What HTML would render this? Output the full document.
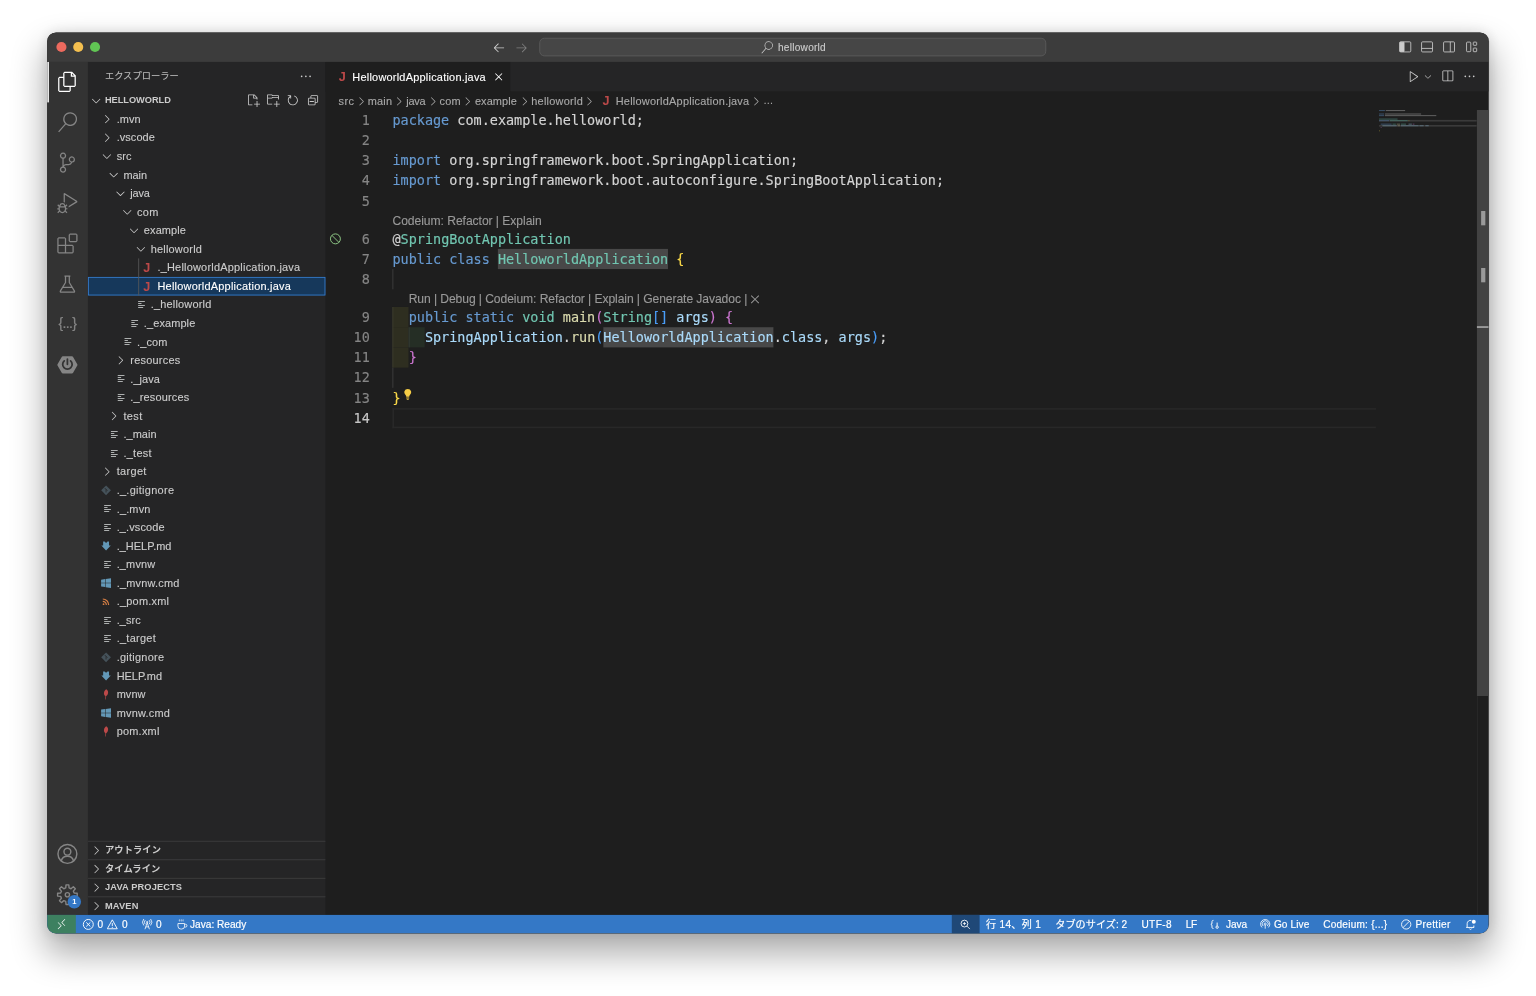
<!DOCTYPE html>
<html lang="ja"><head><meta charset="utf-8"><title>helloworld</title>
<style>
*{box-sizing:border-box;margin:0;padding:0}
html,body{width:1536px;height:996px;overflow:hidden;background:#fff}
body{position:relative;font-family:"Liberation Sans","Noto Sans CJK JP",sans-serif;-webkit-font-smoothing:antialiased}
#layer{position:absolute;left:0;top:0;width:1536px;height:996px;will-change:transform}
#shadow{position:absolute;left:0;top:0;transform:translate(47.2px,32.5px);background:#a8a8a8;width:1441.50px;height:900.94px;border-radius:8.9px;
 box-shadow:0 18px 34px 2px rgba(0,0,0,.33),0 0 14px rgba(0,0,0,.11)}
#win{position:absolute;left:0;top:0;width:1712px;height:1070px;transform:translate(47.2px,32.5px) scale(0.842);transform-origin:0 0;
 border-radius:10.6px;overflow:hidden;background:#1e1e1e;color:#ccc;font-size:13px;line-height:1}
#win div,#win span,#win svg{position:absolute}
#win span.t{white-space:pre;line-height:1}
#win div,#win span,#win svg{left:0;top:0}
svg{overflow:visible;fill:none;stroke:currentColor;stroke-width:1}
svg.f{fill:currentColor;stroke:none}
#win .title{left:0;top:0;width:1712px;height:35px;background:#3c3c3c}
#win .act{left:0;top:35px;width:49px;height:1013px;background:#333333;color:#858585}
#win .side{left:0;top:0;transform:translate(48.4px,35px);width:282px;height:1013px;background:#252526}
#win .tabs{left:331px;top:35px;width:1381px;height:35px;background:#252526}
#win .tab{left:0;top:0;width:219px;height:35px;background:#1e1e1e}
#win .status{left:0;top:1048px;width:1712px;height:22px;background:#3478c6;color:#fff;font-size:12px}
#win .remote{left:0;top:0;width:34px;height:22px;background:#3d8060}
.code span.t{font-family:"DejaVu Sans Mono","Liberation Mono",monospace;font-size:16px}
.ln{font-family:"DejaVu Sans Mono","Liberation Mono",monospace;font-size:16px;color:#858585;text-align:right;width:60px;line-height:24px;height:24px}
.code span.lens{font-family:"Liberation Sans","Noto Sans CJK JP",sans-serif;font-size:14.4px;color:#999}
.row span.t{font-size:13px;color:#cccccc}
.hdr{font-size:11px;font-weight:bold;color:#cccccc}
.bc span.t{color:#a9a9a9;font-size:13px}
#win span.sb{-webkit-text-stroke:.2px #fff}
#win span.lbl,#win span.bcx,#win span.lens,#win span.cc,#win span.sbtitle{-webkit-text-stroke-width:.14px}
#win span.cl,#win .ln{-webkit-text-stroke-width:.18px}

i{font-style:normal}
</style></head><body>
<div id="layer"><div id="shadow"></div>
<div id="win">
<div class="title"><div style="transform:translate(10.90px,11.20px);width:12.20px;height:12.20px;border-radius:50%;background:#ed6a5e"></div><div style="transform:translate(30.85px,11.20px);width:12.20px;height:12.20px;border-radius:50%;background:#f4bf4f"></div><div style="transform:translate(50.80px,11.20px);width:12.20px;height:12.20px;border-radius:50%;background:#61c554"></div><svg class="f" width="16" height="16" viewBox="0 0 16 16" style="transform:translate(528.62px,9.80px);color:#cccccc;"><path d="M7 3.093l-5 5V8.8l5 5 .707-.707-4.146-4.147H14v-1H3.56L7.707 3.8 7 3.093z"/></svg><svg class="f" width="16" height="16" viewBox="0 0 16 16" style="transform:translate(555.33px,9.80px);color:#7f7f7f;"><path d="M9 13.887l5-5V8.18l-5-5-.707.707 4.146 4.147H2v1h10.44L8.293 13.18l.707.707z"/></svg><div style="transform:translate(584.45px,6.30px);width:601.86px;height:22.00px;background:#464646;border:1px solid #5d5d5d;border-radius:6px"></div><svg class="f" width="14.5" height="14.5" viewBox="0 0 16 16" style="transform:translate(847.66px,10.45px);color:#cccccc;"><path transform="scale(.6667)" d="M15.25 0a8.25 8.25 0 0 0-6.18 13.72L1 22.88l1.12 1 8.05-9.12A8.251 8.251 0 1 0 15.25.01V0zm0 15a6.75 6.75 0 1 1 0-13.5 6.75 6.75 0 0 1 0 13.5z"/></svg><span class="t cc" style="transform:translate(867.92px,calc(18.10px - 50%));font-size:12px;color:#cccccc;letter-spacing:0.298px;">helloworld</span><svg width="16" height="16" viewBox="0 0 16 16" style="transform:translate(1604.96px,9.10px);color:#cccccc;"><rect x="1.500" y="2" width="13" height="12" rx="1.200"/><path fill="currentColor" d="M1.500 2.500h5v11h-5z"/></svg><svg width="16" height="16" viewBox="0 0 16 16" style="transform:translate(1630.77px,9.10px);color:#cccccc;"><rect x="1.500" y="2" width="13" height="12" rx="1.200"/><path d="M1.500 9.800h13"/></svg><svg width="16" height="16" viewBox="0 0 16 16" style="transform:translate(1656.89px,9.10px);color:#cccccc;"><rect x="1.500" y="2" width="13" height="12" rx="1.200"/><path d="M9.500 2v12"/></svg><svg width="16" height="16" viewBox="0 0 16 16" style="transform:translate(1683.70px,9.10px);color:#cccccc;"><rect x="2" y="2.300" width="5" height="11.400" rx="1"/><rect x="10" y="2.300" width="4" height="3.800" rx=".6"/><rect x="10" y="9.400" width="4" height="4.300" rx=".6"/></svg></div>
<div class="act"><div style="transform:translate(0.00px,0.00px);width:2.40px;height:48.00px;background:#ffffff"></div><svg class="f" width="24" height="24" viewBox="0 0 24 24" style="transform:translate(12.00px,11.60px);color:#ffffff;"><path d="M17.5 0h-9L7 1.5V6H2.5L1 7.5v15.07L2.5 24h12.07L16 22.57V18h4.7l1.3-1.43V4.5L17.5 0zm0 2.12l2.38 2.38H17.5V2.12zm-3 20.38h-12v-15H7v9.07L8.5 18h6v4.5zm6-6h-12v-15H16V6h4.5v10.5z"/></svg><svg class="f" width="24" height="24" viewBox="0 0 24 24" style="transform:translate(12.00px,59.60px);"><path d="M15.25 0a8.25 8.25 0 0 0-6.18 13.72L1 22.88l1.12 1 8.05-9.12A8.251 8.251 0 1 0 15.25.01V0zm0 15a6.75 6.75 0 1 1 0-13.5 6.75 6.75 0 0 1 0 13.5z"/></svg><svg class="f" width="24" height="24" viewBox="0 0 24 24" style="transform:translate(12.00px,107.60px);"><path d="M21.007 8.222A3.738 3.738 0 0 0 15.045 5.2a3.737 3.737 0 0 0 1.156 6.583 2.988 2.988 0 0 1-2.668 1.67h-2.99a4.456 4.456 0 0 0-2.989 1.165V7.4a3.737 3.737 0 1 0-1.494 0v9.117a3.776 3.776 0 1 0 1.816.099 2.99 2.99 0 0 1 2.668-1.667h2.99a4.484 4.484 0 0 0 4.223-3.039 3.736 3.736 0 0 0 3.25-3.687zM4.565 3.738a2.242 2.242 0 1 1 4.484 0 2.242 2.242 0 0 1-4.484 0zm4.484 16.441a2.242 2.242 0 1 1-4.484 0 2.242 2.242 0 0 1 4.484 0zm8.221-9.715a2.242 2.242 0 1 1 0-4.485 2.242 2.242 0 0 1 0 4.485z"/></svg><svg class="f" width="24" height="24" viewBox="0 0 24 24" style="transform:translate(12.00px,155.60px);"><path d="M10.94 13.5l-1.32 1.32a3.73 3.73 0 0 0-7.24 0L1.06 13.5 0 14.56l1.72 1.72-.22.22V18H0v1.5h1.5v.08c.077.489.214.966.41 1.42L0 22.94 1.06 24l1.65-1.65A4.308 4.308 0 0 0 6 24a4.31 4.31 0 0 0 3.29-1.65L10.94 24 12 22.94 10.09 21c.198-.464.336-.951.41-1.45v-.1H12V18h-1.5v-1.5l-.22-.22L12 14.56l-1.06-1.06zM6 13.5a2.25 2.25 0 0 1 2.25 2.25h-4.5A2.25 2.25 0 0 1 6 13.5zm3 6a3.33 3.33 0 0 1-3 3 3.33 3.33 0 0 1-3-3v-2.25h6v2.25zm14.76-9.9v1.26L13.5 17.37V15.6l8.5-5.37L9 2v9.46a5.07 5.07 0 0 0-1.5-.72V.63L8.64 0l15.12 9.6z"/></svg><svg class="f" width="24" height="24" viewBox="0 0 24 24" style="transform:translate(12.00px,203.60px);"><path d="M13.5 1.5L15 0h7.5L24 1.5V9l-1.5 1.5H15L13.5 9V1.5zm1.5 0V9h7.5V1.5H15zM0 15V6l1.5-1.5H9L10.5 6v7.5H18l1.5 1.5v7.5L18 24H1.5L0 22.5V15zm9-1.5V6H1.5v7.5H9zM9 15H1.5v7.5H9V15zm1.5 7.5H18V15h-7.5v7.5z"/></svg><svg width="24" height="24" viewBox="0 0 24 24" style="transform:translate(12.00px,251.60px);"><path d="M8.5 2.75h7M9.75 2.75v7.5L3.6 20.6a.8.8 0 0 0 .7 1.15h15.4a.8.8 0 0 0 .7-1.15L14.25 10.25v-7.5M6.2 16.2h11.6" stroke-width="1.5" stroke-linejoin="round"/></svg><span class="t" style="transform:translate(calc(24px - 50%),calc(310.0px - 50%));font-size:16.5px;letter-spacing:-.7px;-webkit-text-stroke:.25px #858585;color:#858585">{...}</span><svg width="26.5" height="26.5" viewBox="0 0 24 24" style="transform:translate(10.75px,345.55px);"><path fill="currentColor" stroke="none" d="M6.6 2.6h10.8a1.6 1.6 0 0 1 1.4.8l5 8.6a1.6 1.6 0 0 1 0 1.6l-5 8.6a1.6 1.6 0 0 1-1.4.8H6.6a1.6 1.6 0 0 1-1.4-.8l-5-8.6a1.6 1.6 0 0 1 0-1.6l5-8.6a1.6 1.6 0 0 1 1.4-.8z" transform="translate(1.2 1.3) scale(.9)"/><path stroke="#333" stroke-width="1.9" stroke-linecap="round" d="M12 6.6v5.6M8.6 8.5a5.1 5.1 0 1 0 6.8 0"/></svg><svg width="26.4" height="26.4" viewBox="0 0 24 24" style="transform:translate(10.80px,927.40px);"><circle cx="12" cy="12" r="10.2" stroke-width="1.55"/><circle cx="12" cy="9.600" r="3.700" stroke-width="1.55"/><path d="M5.300 19.600c.800-3.300 3.500-5.200 6.700-5.200s5.900 1.900 6.700 5.200" stroke-width="1.55"/></svg><svg width="26.4" height="26.4" viewBox="0 0 24 24" style="transform:translate(10.80px,975.80px);"><path d="M19.28 10.19 L22.59 10.49 L22.59 13.51 L19.28 13.81 L18.43 15.87 L20.56 18.42 L18.42 20.56 L15.87 18.43 L13.81 19.28 L13.51 22.59 L10.49 22.59 L10.19 19.28 L8.13 18.43 L5.58 20.56 L3.44 18.42 L5.57 15.87 L4.72 13.81 L1.41 13.51 L1.41 10.49 L4.72 10.19 L5.57 8.13 L3.44 5.58 L5.58 3.44 L8.13 5.57 L10.19 4.72 L10.49 1.41 L13.51 1.41 L13.81 4.72 L15.87 5.57 L18.42 3.44 L20.56 5.58 L18.43 8.13Z" stroke-width="1.5" stroke-linejoin="round"/><circle cx="12" cy="12" r="2.3" stroke-width="1.5"/></svg><div style="transform:translate(24.20px,989.40px);width:16.00px;height:16.00px;border-radius:50%;background:#3478c6"></div><span class="t" style="transform:translate(calc(32.2px - 50%),calc(997.7px - 50%));font-size:9px;font-weight:bold;color:#fff">1</span></div>
<div class="side"><div style="transform:translate(-.4px,0)"><span class="t sbtitle" style="transform:translate(20.50px,calc(17.00px - 50%));font-size:11px;color:#bbbbbb">エクスプローラー</span><svg class="f" width="16" height="16" viewBox="0 0 16 16" style="transform:translate(251.20px,9.00px);color:#cccccc;"><path d="M4 8a1 1 0 1 1-2 0 1 1 0 0 1 2 0zm5 0a1 1 0 1 1-2 0 1 1 0 0 1 2 0zm5 0a1 1 0 1 1-2 0 1 1 0 0 1 2 0z"/></svg><svg class="f" width="16" height="16" viewBox="0 0 16 16" style="transform:translate(2.20px,38.00px);color:#cccccc;"><path d="M7.976 10.072l4.357-4.357.62.618L8.284 11h-.618L3 6.333l.619-.618 4.357 4.357z"/></svg><span class="t hdr" style="transform:translate(20.50px,calc(45.80px - 50%));;letter-spacing:-0.045px;">HELLOWORLD</span><svg class="f" width="16" height="16" viewBox="0 0 16 16" style="transform:translate(188.70px,37.50px);color:#cccccc;"><path d="M9.5 1.1l3.4 3.5.1.4v2h-1V6H8V2H3v11h4v1H2.5l-.5-.5v-12l.5-.5h6.7l.3.1zM9 2v3h2.9L9 2zm4 14h-1v-3H9v-1h3V9h1v3h3v1h-3v3z"/></svg><svg class="f" width="16" height="16" viewBox="0 0 16 16" style="transform:translate(212.20px,37.50px);color:#cccccc;"><path d="M14.5 2H7.71l-.85-.85L6.51 1h-5l-.5.5v11l.5.5H7v-1H1.99V6h4.49l.35-.15.86-.86H14v1.5l-.001.51h1.011V2.5L14.5 2zm-.51 2h-6.5l-.35.15-.86.86H2v-3h4.29l.85.85.36.15H14l-.01.99zM13 16h-1v-3H9v-1h3V9h1v3h3v1h-3v3z"/></svg><svg class="f" width="16" height="16" viewBox="0 0 16 16" style="transform:translate(235.70px,37.50px);color:#cccccc;"><path fill-rule="evenodd" d="M4.681 3H2V2h3.5l.5.5V6H5V4a5 5 0 1 0 4.530-.761l.302-.954A6 6 0 1 1 4.681 3z"/></svg><svg class="f" width="16" height="16" viewBox="0 0 16 16" style="transform:translate(259.70px,37.50px);color:#cccccc;"><path d="M9 9H4v1h5V9z"/><path fill-rule="evenodd" d="M5 3l1-1h7l1 1v7l-1 1h-2v2l-1 1H3l-1-1V6l1-1h2V3zm1 2h4l1 1v4h2V3H6v2zm4 1H3v7h7V6z"/></svg><div class="row" style="left:0;top:0"><svg class="f" width="16" height="16" viewBox="0 0 16 16" style="transform:translate(14.90px,59.90px);color:#cccccc;"><path d="M10.072 8.024L5.715 3.667l.618-.62L11 7.716v.618L6.333 13l-.618-.619 4.357-4.357z"/></svg><span class="t lbl" style="transform:translate(34.50px,calc(67.90px - 50%));color:#cccccc;letter-spacing:0.110px;">.mvn</span></div><div class="row" style="left:0;top:0"><svg class="f" width="16" height="16" viewBox="0 0 16 16" style="transform:translate(14.90px,81.94px);color:#cccccc;"><path d="M10.072 8.024L5.715 3.667l.618-.62L11 7.716v.618L6.333 13l-.618-.619 4.357-4.357z"/></svg><span class="t lbl" style="transform:translate(34.50px,calc(89.94px - 50%));color:#cccccc;letter-spacing:0.079px;">.vscode</span></div><div class="row" style="left:0;top:0"><svg class="f" width="16" height="16" viewBox="0 0 16 16" style="transform:translate(14.90px,103.97px);color:#cccccc;"><path d="M7.976 10.072l4.357-4.357.62.618L8.284 11h-.618L3 6.333l.619-.618 4.357 4.357z"/></svg><span class="t lbl" style="transform:translate(34.50px,calc(111.97px - 50%));color:#cccccc;letter-spacing:0.198px;">src</span></div><div class="row" style="left:0;top:0"><svg class="f" width="16" height="16" viewBox="0 0 16 16" style="transform:translate(22.97px,126.00px);color:#cccccc;"><path d="M7.976 10.072l4.357-4.357.62.618L8.284 11h-.618L3 6.333l.619-.618 4.357 4.357z"/></svg><span class="t lbl" style="transform:translate(42.57px,calc(134.00px - 50%));color:#cccccc;letter-spacing:-0.038px;">main</span></div><div class="row" style="left:0;top:0"><svg class="f" width="16" height="16" viewBox="0 0 16 16" style="transform:translate(31.04px,148.04px);color:#cccccc;"><path d="M7.976 10.072l4.357-4.357.62.618L8.284 11h-.618L3 6.333l.619-.618 4.357 4.357z"/></svg><span class="t lbl" style="transform:translate(50.64px,calc(156.04px - 50%));color:#cccccc;letter-spacing:-0.204px;">java</span></div><div class="row" style="left:0;top:0"><svg class="f" width="16" height="16" viewBox="0 0 16 16" style="transform:translate(39.11px,170.08px);color:#cccccc;"><path d="M7.976 10.072l4.357-4.357.62.618L8.284 11h-.618L3 6.333l.619-.618 4.357 4.357z"/></svg><span class="t lbl" style="transform:translate(58.71px,calc(178.08px - 50%));color:#cccccc;letter-spacing:0.401px;">com</span></div><div class="row" style="left:0;top:0"><svg class="f" width="16" height="16" viewBox="0 0 16 16" style="transform:translate(47.18px,192.11px);color:#cccccc;"><path d="M7.976 10.072l4.357-4.357.62.618L8.284 11h-.618L3 6.333l.619-.618 4.357 4.357z"/></svg><span class="t lbl" style="transform:translate(66.78px,calc(200.11px - 50%));color:#cccccc;letter-spacing:0.139px;">example</span></div><div class="row" style="left:0;top:0"><svg class="f" width="16" height="16" viewBox="0 0 16 16" style="transform:translate(55.25px,214.15px);color:#cccccc;"><path d="M7.976 10.072l4.357-4.357.62.618L8.284 11h-.618L3 6.333l.619-.618 4.357 4.357z"/></svg><span class="t lbl" style="transform:translate(74.85px,calc(222.15px - 50%));color:#cccccc;letter-spacing:0.263px;">helloworld</span></div><div class="row" style="left:0;top:0"><span class="t jj" style="transform:translate(66.12px,calc(243.98px - 50%));font-size:15px;font-weight:bold;color:#bc4949">J</span><span class="t lbl" style="transform:translate(82.92px,calc(244.18px - 50%));color:#cccccc;letter-spacing:0.254px;">._HelloworldApplication.java</span></div><div style="transform:translate(0.40px,255.31px);width:282.00px;height:22.00px;background:#16385b;border:1px solid #377dce"></div><div class="row" style="left:0;top:0"><span class="t jj" style="transform:translate(66.12px,calc(266.01px - 50%));font-size:15px;font-weight:bold;color:#bc4949">J</span><span class="t lbl" style="transform:translate(82.92px,calc(266.21px - 50%));color:#ffffff;letter-spacing:0.266px;">HelloworldApplication.java</span></div><div class="row" style="left:0;top:0"><div style="transform:translate(59.98px,283.88px);width:8.31px;height:1.19px;background:#c8cbca"></div><div style="transform:translate(59.98px,286.26px);width:4.28px;height:1.19px;background:#c8cbca"></div><div style="transform:translate(59.98px,288.63px);width:8.31px;height:1.19px;background:#c8cbca"></div><div style="transform:translate(59.98px,291.01px);width:6.06px;height:1.19px;background:#c8cbca"></div><span class="t lbl" style="transform:translate(74.85px,calc(288.25px - 50%));color:#cccccc;letter-spacing:0.246px;">._helloworld</span></div><div class="row" style="left:0;top:0"><div style="transform:translate(51.91px,306.45px);width:8.31px;height:1.19px;background:#c8cbca"></div><div style="transform:translate(51.91px,308.82px);width:4.28px;height:1.19px;background:#c8cbca"></div><div style="transform:translate(51.91px,311.20px);width:8.31px;height:1.19px;background:#c8cbca"></div><div style="transform:translate(51.91px,313.57px);width:6.06px;height:1.19px;background:#c8cbca"></div><span class="t lbl" style="transform:translate(66.78px,calc(310.28px - 50%));color:#cccccc;letter-spacing:0.130px;">._example</span></div><div class="row" style="left:0;top:0"><div style="transform:translate(43.84px,327.83px);width:8.31px;height:1.19px;background:#c8cbca"></div><div style="transform:translate(43.84px,330.20px);width:4.28px;height:1.19px;background:#c8cbca"></div><div style="transform:translate(43.84px,332.58px);width:8.31px;height:1.19px;background:#c8cbca"></div><div style="transform:translate(43.84px,334.95px);width:6.06px;height:1.19px;background:#c8cbca"></div><span class="t lbl" style="transform:translate(58.71px,calc(332.32px - 50%));color:#cccccc;letter-spacing:0.164px;">._com</span></div><div class="row" style="left:0;top:0"><svg class="f" width="16" height="16" viewBox="0 0 16 16" style="transform:translate(31.04px,346.35px);color:#cccccc;"><path d="M10.072 8.024L5.715 3.667l.618-.62L11 7.716v.618L6.333 13l-.618-.619 4.357-4.357z"/></svg><span class="t lbl" style="transform:translate(50.64px,calc(354.35px - 50%));color:#cccccc;letter-spacing:0.282px;">resources</span></div><div class="row" style="left:0;top:0"><div style="transform:translate(35.77px,371.77px);width:8.31px;height:1.19px;background:#c8cbca"></div><div style="transform:translate(35.77px,374.14px);width:4.28px;height:1.19px;background:#c8cbca"></div><div style="transform:translate(35.77px,376.52px);width:8.31px;height:1.19px;background:#c8cbca"></div><div style="transform:translate(35.77px,378.90px);width:6.06px;height:1.19px;background:#c8cbca"></div><span class="t lbl" style="transform:translate(50.64px,calc(376.39px - 50%));color:#cccccc;letter-spacing:0.115px;">._java</span></div><div class="row" style="left:0;top:0"><div style="transform:translate(35.77px,394.33px);width:8.31px;height:1.19px;background:#c8cbca"></div><div style="transform:translate(35.77px,396.71px);width:4.28px;height:1.19px;background:#c8cbca"></div><div style="transform:translate(35.77px,399.09px);width:8.31px;height:1.19px;background:#c8cbca"></div><div style="transform:translate(35.77px,401.46px);width:6.06px;height:1.19px;background:#c8cbca"></div><span class="t lbl" style="transform:translate(50.64px,calc(398.42px - 50%));color:#cccccc;letter-spacing:0.205px;">._resources</span></div><div class="row" style="left:0;top:0"><svg class="f" width="16" height="16" viewBox="0 0 16 16" style="transform:translate(22.97px,412.46px);color:#cccccc;"><path d="M10.072 8.024L5.715 3.667l.618-.62L11 7.716v.618L6.333 13l-.618-.619 4.357-4.357z"/></svg><span class="t lbl" style="transform:translate(42.57px,calc(420.46px - 50%));color:#cccccc;letter-spacing:0.432px;">test</span></div><div class="row" style="left:0;top:0"><div style="transform:translate(27.70px,438.28px);width:8.31px;height:1.19px;background:#c8cbca"></div><div style="transform:translate(27.70px,440.65px);width:4.28px;height:1.19px;background:#c8cbca"></div><div style="transform:translate(27.70px,443.03px);width:8.31px;height:1.19px;background:#c8cbca"></div><div style="transform:translate(27.70px,445.40px);width:6.06px;height:1.19px;background:#c8cbca"></div><span class="t lbl" style="transform:translate(42.57px,calc(442.50px - 50%));color:#cccccc;letter-spacing:0.048px;">._main</span></div><div class="row" style="left:0;top:0"><div style="transform:translate(27.70px,460.84px);width:8.31px;height:1.19px;background:#c8cbca"></div><div style="transform:translate(27.70px,463.22px);width:4.28px;height:1.19px;background:#c8cbca"></div><div style="transform:translate(27.70px,465.59px);width:8.31px;height:1.19px;background:#c8cbca"></div><div style="transform:translate(27.70px,467.97px);width:6.06px;height:1.19px;background:#c8cbca"></div><span class="t lbl" style="transform:translate(42.57px,calc(464.53px - 50%));color:#cccccc;letter-spacing:0.302px;">._test</span></div><div class="row" style="left:0;top:0"><svg class="f" width="16" height="16" viewBox="0 0 16 16" style="transform:translate(14.90px,478.56px);color:#cccccc;"><path d="M10.072 8.024L5.715 3.667l.618-.62L11 7.716v.618L6.333 13l-.618-.619 4.357-4.357z"/></svg><span class="t lbl" style="transform:translate(34.50px,calc(486.56px - 50%));color:#cccccc;letter-spacing:0.417px;">target</span></div><div class="row" style="left:0;top:0"><svg width="16" height="16" viewBox="0 0 16 16" style="transform:translate(13.90px,500.70px);color:#45525a;"><path fill="currentColor" stroke="none" d="M8 2.200L13.800 8 8 13.800 2.200 8z"/><path stroke="#252526" stroke-width=".9" d="M6.400 5.300l3.300 3.300M8 6.900v3.700"/></svg><span class="t lbl" style="transform:translate(34.50px,calc(508.60px - 50%));color:#cccccc;letter-spacing:0.340px;">._.gitignore</span></div><div class="row" style="left:0;top:0"><div style="transform:translate(19.63px,526.16px);width:8.31px;height:1.19px;background:#c8cbca"></div><div style="transform:translate(19.63px,528.54px);width:4.28px;height:1.19px;background:#c8cbca"></div><div style="transform:translate(19.63px,530.91px);width:8.31px;height:1.19px;background:#c8cbca"></div><div style="transform:translate(19.63px,533.29px);width:6.06px;height:1.19px;background:#c8cbca"></div><span class="t lbl" style="transform:translate(34.50px,calc(530.63px - 50%));color:#cccccc;letter-spacing:0.208px;">._.mvn</span></div><div class="row" style="left:0;top:0"><div style="transform:translate(19.63px,548.73px);width:8.31px;height:1.19px;background:#c8cbca"></div><div style="transform:translate(19.63px,551.10px);width:4.28px;height:1.19px;background:#c8cbca"></div><div style="transform:translate(19.63px,553.48px);width:8.31px;height:1.19px;background:#c8cbca"></div><div style="transform:translate(19.63px,555.86px);width:6.06px;height:1.19px;background:#c8cbca"></div><span class="t lbl" style="transform:translate(34.50px,calc(552.67px - 50%));color:#cccccc;letter-spacing:0.150px;">._.vscode</span></div><div class="row" style="left:0;top:0"><svg width="15" height="15" viewBox="0 0 16 16" style="transform:translate(14.40px,567.31px);color:#6398b7;"><path fill="currentColor" stroke="none" d="M4.300 2.500h1.800l1.900 1.600 1.900-1.600h1.800v5h2.300L8 13.800 2 7.500h2.300z"/></svg><span class="t lbl" style="transform:translate(34.50px,calc(574.71px - 50%));color:#cccccc;letter-spacing:0.032px;">._HELP.md</span></div><div class="row" style="left:0;top:0"><div style="transform:translate(19.63px,592.67px);width:8.31px;height:1.19px;background:#c8cbca"></div><div style="transform:translate(19.63px,595.05px);width:4.28px;height:1.19px;background:#c8cbca"></div><div style="transform:translate(19.63px,597.42px);width:8.31px;height:1.19px;background:#c8cbca"></div><div style="transform:translate(19.63px,599.80px);width:6.06px;height:1.19px;background:#c8cbca"></div><span class="t lbl" style="transform:translate(34.50px,calc(596.74px - 50%));color:#cccccc;letter-spacing:0.194px;">._mvnw</span></div><div class="row" style="left:0;top:0"><svg width="14.5" height="14.5" viewBox="0 0 16 16" style="transform:translate(14.65px,611.62px);color:#6398b7;"><path fill="currentColor" stroke="none" d="M1.500 3.600l5.300-.8v4.900H1.500zM7.500 2.700l7-1v6H7.500zM1.500 8.400h5.300v4.900l-5.300-.8zM7.500 8.400h7v6l-7-1z"/></svg><span class="t lbl" style="transform:translate(34.50px,calc(618.77px - 50%));color:#cccccc;letter-spacing:0.256px;">._mvnw.cmd</span></div><div class="row" style="left:0;top:0"><svg width="13" height="13" viewBox="0 0 16 16" style="transform:translate(15.40px,634.41px);color:#d57e44;"><path d="M3.200 4.200a8.600 8.600 0 0 1 8.600 8.600M3.200 7.600a5.200 5.200 0 0 1 5.200 5.200" stroke-width="1.700"/><circle cx="4.300" cy="11.700" r="1.300" fill="currentColor" stroke="none"/></svg><span class="t lbl" style="transform:translate(34.50px,calc(640.81px - 50%));color:#cccccc;letter-spacing:0.278px;">._pom.xml</span></div><div class="row" style="left:0;top:0"><div style="transform:translate(19.63px,659.18px);width:8.31px;height:1.19px;background:#c8cbca"></div><div style="transform:translate(19.63px,661.56px);width:4.28px;height:1.19px;background:#c8cbca"></div><div style="transform:translate(19.63px,663.93px);width:8.31px;height:1.19px;background:#c8cbca"></div><div style="transform:translate(19.63px,666.31px);width:6.06px;height:1.19px;background:#c8cbca"></div><span class="t lbl" style="transform:translate(34.50px,calc(662.85px - 50%));color:#cccccc;letter-spacing:0.137px;">._src</span></div><div class="row" style="left:0;top:0"><div style="transform:translate(19.63px,680.56px);width:8.31px;height:1.19px;background:#c8cbca"></div><div style="transform:translate(19.63px,682.93px);width:4.28px;height:1.19px;background:#c8cbca"></div><div style="transform:translate(19.63px,685.31px);width:8.31px;height:1.19px;background:#c8cbca"></div><div style="transform:translate(19.63px,687.68px);width:6.06px;height:1.19px;background:#c8cbca"></div><span class="t lbl" style="transform:translate(34.50px,calc(684.88px - 50%));color:#cccccc;letter-spacing:0.338px;">._target</span></div><div class="row" style="left:0;top:0"><svg width="16" height="16" viewBox="0 0 16 16" style="transform:translate(13.90px,699.01px);color:#45525a;"><path fill="currentColor" stroke="none" d="M8 2.200L13.800 8 8 13.800 2.200 8z"/><path stroke="#252526" stroke-width=".9" d="M6.400 5.300l3.300 3.300M8 6.900v3.700"/></svg><span class="t lbl" style="transform:translate(34.50px,calc(706.91px - 50%));color:#cccccc;letter-spacing:0.304px;">.gitignore</span></div><div class="row" style="left:0;top:0"><svg width="15" height="15" viewBox="0 0 16 16" style="transform:translate(14.40px,721.55px);color:#6398b7;"><path fill="currentColor" stroke="none" d="M4.300 2.500h1.800l1.900 1.600 1.900-1.600h1.800v5h2.300L8 13.800 2 7.500h2.300z"/></svg><span class="t lbl" style="transform:translate(34.50px,calc(728.95px - 50%));color:#cccccc;letter-spacing:-0.023px;">HELP.md</span></div><div class="row" style="left:0;top:0"><svg width="15" height="15" viewBox="0 0 16 16" style="transform:translate(14.40px,743.59px);color:#bc4949;"><path fill="currentColor" stroke="none" d="M8.300 1.500c2.300 1.400 3 4.200 1.700 6.600-.500 1-1.200 1.600-1.900 2l-.300 4.400h-.700l.100-4.300c-1.500-.900-2.300-2.900-1.700-5 .400-1.600 1.500-3 2.800-3.700z"/></svg><span class="t lbl" style="transform:translate(34.50px,calc(750.99px - 50%));color:#cccccc;letter-spacing:0.092px;">mvnw</span></div><div class="row" style="left:0;top:0"><svg width="14.5" height="14.5" viewBox="0 0 16 16" style="transform:translate(14.65px,765.87px);color:#6398b7;"><path fill="currentColor" stroke="none" d="M1.500 3.600l5.300-.8v4.900H1.500zM7.500 2.700l7-1v6H7.500zM1.500 8.400h5.300v4.900l-5.300-.8zM7.500 8.400h7v6l-7-1z"/></svg><span class="t lbl" style="transform:translate(34.50px,calc(773.02px - 50%));color:#cccccc;letter-spacing:0.251px;">mvnw.cmd</span></div><div class="row" style="left:0;top:0"><svg width="15" height="15" viewBox="0 0 16 16" style="transform:translate(14.40px,787.65px);color:#bc4949;"><path fill="currentColor" stroke="none" d="M8.300 1.500c2.300 1.400 3 4.200 1.700 6.600-.500 1-1.200 1.600-1.900 2l-.300 4.400h-.700l.100-4.300c-1.500-.900-2.300-2.900-1.700-5 .400-1.600 1.500-3 2.800-3.700z"/></svg><span class="t lbl" style="transform:translate(34.50px,calc(795.05px - 50%));color:#cccccc;letter-spacing:0.260px;">pom.xml</span></div><div style="transform:translate(60.19px,233.28px);width:1.00px;height:44.00px;background:#585858"></div><div style="transform:translate(0.40px,925.00px);width:282.00px;height:1.00px;background:#3f3f40"></div><svg class="f" width="16" height="16" viewBox="0 0 16 16" style="transform:translate(2.30px,928.50px);color:#cccccc;"><path d="M10.072 8.024L5.715 3.667l.618-.62L11 7.716v.618L6.333 13l-.618-.619 4.357-4.357z"/></svg><span class="t hdr" style="transform:translate(20.60px,calc(936.50px - 50%));;letter-spacing:0.100px;">アウトライン</span><div style="transform:translate(0.40px,947.00px);width:282.00px;height:1.00px;background:#3f3f40"></div><svg class="f" width="16" height="16" viewBox="0 0 16 16" style="transform:translate(2.30px,950.50px);color:#cccccc;"><path d="M10.072 8.024L5.715 3.667l.618-.62L11 7.716v.618L6.333 13l-.618-.619 4.357-4.357z"/></svg><span class="t hdr" style="transform:translate(20.60px,calc(958.50px - 50%));;letter-spacing:0.100px;">タイムライン</span><div style="transform:translate(0.40px,969.00px);width:282.00px;height:1.00px;background:#3f3f40"></div><svg class="f" width="16" height="16" viewBox="0 0 16 16" style="transform:translate(2.30px,972.50px);color:#cccccc;"><path d="M10.072 8.024L5.715 3.667l.618-.62L11 7.716v.618L6.333 13l-.618-.619 4.357-4.357z"/></svg><span class="t hdr" style="transform:translate(20.60px,calc(980.50px - 50%));;letter-spacing:0.156px;">JAVA PROJECTS</span><div style="transform:translate(0.40px,991.00px);width:282.00px;height:1.00px;background:#3f3f40"></div><svg class="f" width="16" height="16" viewBox="0 0 16 16" style="transform:translate(2.30px,994.50px);color:#cccccc;"><path d="M10.072 8.024L5.715 3.667l.618-.62L11 7.716v.618L6.333 13l-.618-.619 4.357-4.357z"/></svg><span class="t hdr" style="transform:translate(20.60px,calc(1002.50px - 50%));;letter-spacing:0.198px;">MAVEN</span></div></div>
<div class="tabs"><div class="tab"><span class="t jj" style="transform:translate(15.30px,calc(17.60px - 50%));font-size:15px;font-weight:bold;color:#bc4949">J</span><span class="t lbl" style="transform:translate(31.40px,calc(18.20px - 50%));color:#ffffff;letter-spacing:0.266px;">HelloworldApplication.java</span><svg class="f" width="16" height="16" viewBox="0 0 16 16" style="transform:translate(197.22px,9.70px);color:#ffffff;"><path d="M8 8.707l3.646 3.647.708-.707L8.707 8l3.647-3.646-.707-.708L8 7.293 4.354 3.646l-.707.708L7.293 8l-3.646 3.646.707.708L8 8.707z"/></svg></div><svg class="f" width="16" height="16" viewBox="0 0 16 16" style="transform:translate(1284.26px,9.00px);color:#cccccc;"><path d="M3.78 2L3 2.41v12l.78.42 9-6V8l-9-6zM4 13.48V3.35l7.6 5.07L4 13.48z"/></svg><svg class="f" width="12" height="12" viewBox="0 0 16 16" style="transform:translate(1302.87px,11.50px);color:#cccccc;"><path d="M7.976 10.072l4.357-4.357.62.618L8.284 11h-.618L3 6.333l.619-.618 4.357 4.357z"/></svg><svg class="f" width="16" height="16" viewBox="0 0 16 16" style="transform:translate(1323.99px,9.00px);color:#cccccc;"><path d="M14 1H3L2 2v11l1 1h11l1-1V2l-1-1zM8 13H3V2h5v11zm6 0H9V2h5v11z"/></svg><svg class="f" width="16" height="16" viewBox="0 0 16 16" style="transform:translate(1350.20px,9.00px);color:#cccccc;"><path d="M4 8a1 1 0 1 1-2 0 1 1 0 0 1 2 0zm5 0a1 1 0 1 1-2 0 1 1 0 0 1 2 0zm5 0a1 1 0 1 1-2 0 1 1 0 0 1 2 0z"/></svg></div>
<div class="bc" style="left:0;top:0"><span class="t bcx" style="transform:translate(346.08px,calc(81.30px - 50%));;letter-spacing:0.515px;">src</span><span class="t bcx" style="transform:translate(380.76px,calc(81.30px - 50%));;letter-spacing:0.197px;">main</span><span class="t bcx" style="transform:translate(426.48px,calc(81.30px - 50%));;letter-spacing:-0.294px;">java</span><span class="t bcx" style="transform:translate(465.91px,calc(81.30px - 50%));;letter-spacing:0.242px;">com</span><span class="t bcx" style="transform:translate(507.96px,calc(81.30px - 50%));;letter-spacing:0.122px;">example</span><span class="t bcx" style="transform:translate(574.82px,calc(81.30px - 50%));;letter-spacing:0.298px;">helloworld</span><svg class="f" width="16" height="16" viewBox="0 0 16 16" style="transform:translate(364.92px,73.80px);color:#a9a9a9;"><path d="M10.072 8.024L5.715 3.667l.618-.62L11 7.716v.618L6.333 13l-.618-.619 4.357-4.357z"/></svg><svg class="f" width="16" height="16" viewBox="0 0 16 16" style="transform:translate(409.58px,73.80px);color:#a9a9a9;"><path d="M10.072 8.024L5.715 3.667l.618-.62L11 7.716v.618L6.333 13l-.618-.619 4.357-4.357z"/></svg><svg class="f" width="16" height="16" viewBox="0 0 16 16" style="transform:translate(450.08px,73.80px);color:#a9a9a9;"><path d="M10.072 8.024L5.715 3.667l.618-.62L11 7.716v.618L6.333 13l-.618-.619 4.357-4.357z"/></svg><svg class="f" width="16" height="16" viewBox="0 0 16 16" style="transform:translate(491.05px,73.80px);color:#a9a9a9;"><path d="M10.072 8.024L5.715 3.667l.618-.62L11 7.716v.618L6.333 13l-.618-.619 4.357-4.357z"/></svg><svg class="f" width="16" height="16" viewBox="0 0 16 16" style="transform:translate(558.86px,73.80px);color:#a9a9a9;"><path d="M10.072 8.024L5.715 3.667l.618-.62L11 7.716v.618L6.333 13l-.618-.619 4.357-4.357z"/></svg><svg class="f" width="16" height="16" viewBox="0 0 16 16" style="transform:translate(635.59px,73.80px);color:#a9a9a9;"><path d="M10.072 8.024L5.715 3.667l.618-.62L11 7.716v.618L6.333 13l-.618-.619 4.357-4.357z"/></svg><svg class="f" width="16" height="16" viewBox="0 0 16 16" style="transform:translate(833.81px,73.80px);color:#a9a9a9;"><path d="M10.072 8.024L5.715 3.667l.618-.62L11 7.716v.618L6.333 13l-.618-.619 4.357-4.357z"/></svg><span class="t jj" style="transform:translate(659.45px,calc(81.00px - 50%));font-size:15px;font-weight:bold;color:#bc4949">J</span><span class="t bcx" style="transform:translate(675.18px,calc(81.30px - 50%));;letter-spacing:0.270px;">HelloworldApplication.java</span><span class="t bcx" style="transform:translate(850.36px,calc(81.30px - 50%));font-size:12px;letter-spacing:0.200px;">…</span></div>
<div class="code" style="left:0;top:0"><div style="transform:translate(410.04px,326.00px);width:19.26px;height:24.00px;background:#2e2e20"></div><div style="transform:translate(410.04px,350.00px);width:19.26px;height:24.00px;background:#2e2e20"></div><div style="transform:translate(410.04px,374.00px);width:19.26px;height:24.00px;background:#2e2e20"></div><div style="transform:translate(429.31px,350.00px);width:19.26px;height:24.00px;background:#252e25"></div><div style="transform:translate(410.04px,281.00px);width:1.00px;height:24.00px;background:#404040"></div><div style="transform:translate(410.04px,398.00px);width:1.00px;height:24.00px;background:#404040"></div><div style="transform:translate(410.04px,326.00px);width:1.00px;height:72.00px;background:#3c3c30"></div><div style="transform:translate(429.31px,350.00px);width:1.00px;height:24.00px;background:#3a3f38"></div><div style="transform:translate(535.26px,257.00px);width:202.27px;height:24.00px;background:#484848"></div><div style="transform:translate(660.48px,350.00px);width:202.27px;height:24.00px;background:#484848"></div><div style="transform:translate(410.04px,446.00px);width:1168.09px;height:24.00px;border:2px solid #282828;border-right:none"></div><div class="ln" style="transform:translate(323.13px,92.6px);">1</div><span class="t cl" style="transform:translate(410.04px,calc(104.60px - 50%));"><i style="color:#679ad1">package</i><i style="color:#d4d4d4"> com.example.helloworld;</i></span><div class="ln" style="transform:translate(323.13px,116.6px);">2</div><div class="ln" style="transform:translate(323.13px,140.6px);">3</div><span class="t cl" style="transform:translate(410.04px,calc(152.60px - 50%));"><i style="color:#679ad1">import</i><i style="color:#d4d4d4"> org.springframework.boot.SpringApplication;</i></span><div class="ln" style="transform:translate(323.13px,164.6px);">4</div><span class="t cl" style="transform:translate(410.04px,calc(176.60px - 50%));"><i style="color:#679ad1">import</i><i style="color:#d4d4d4"> org.springframework.boot.autoconfigure.SpringBootApplication;</i></span><div class="ln" style="transform:translate(323.13px,188.6px);">5</div><div class="ln" style="transform:translate(323.13px,233.6px);">6</div><span class="t cl" style="transform:translate(410.04px,calc(245.60px - 50%));"><i style="color:#d4d4d4">@</i><i style="color:#71c6b1">SpringBootApplication</i></span><div class="ln" style="transform:translate(323.13px,257.6px);">7</div><span class="t cl" style="transform:translate(410.04px,calc(269.60px - 50%));"><i style="color:#679ad1">public class </i><i style="color:#71c6b1">HelloworldApplication</i> <i style="color:#f9d849">{</i></span><div class="ln" style="transform:translate(323.13px,281.6px);">8</div><div class="ln" style="transform:translate(323.13px,326.6px);">9</div><span class="t cl" style="transform:translate(410.04px,calc(338.60px - 50%));">  <i style="color:#679ad1">public static </i><i style="color:#71c6b1">void </i><i style="color:#dcdcaf">main</i><i style="color:#cc76d1">(</i><i style="color:#71c6b1">String</i><i style="color:#4a9df8">[]</i><i style="color:#aadafa"> args</i><i style="color:#cc76d1">) {</i></span><div class="ln" style="transform:translate(323.13px,350.6px);">10</div><span class="t cl" style="transform:translate(410.04px,calc(362.60px - 50%));">    <i style="color:#aadafa">SpringApplication</i><i style="color:#d4d4d4">.</i><i style="color:#dcdcaf">run</i><i style="color:#4a9df8">(</i><i style="color:#aadafa">HelloworldApplication</i><i style="color:#d4d4d4">.</i><i style="color:#aadafa">class</i><i style="color:#d4d4d4">, </i><i style="color:#aadafa">args</i><i style="color:#4a9df8">)</i><i style="color:#d4d4d4">;</i></span><div class="ln" style="transform:translate(323.13px,374.6px);">11</div><span class="t cl" style="transform:translate(410.04px,calc(386.60px - 50%));">  <i style="color:#cc76d1">}</i></span><div class="ln" style="transform:translate(323.13px,398.6px);">12</div><div class="ln" style="transform:translate(323.13px,422.6px);">13</div><span class="t cl" style="transform:translate(410.04px,calc(434.60px - 50%));"><i style="color:#f9d849">}</i></span><div class="ln" style="transform:translate(323.13px,446.6px);color:#c6c6c6">14</div><span class="t lens" style="transform:translate(410.04px,calc(223.40px - 50%));;letter-spacing:-0.064px;">Codeium: Refactor | Explain</span><span class="t lens" style="transform:translate(429.31px,calc(316.40px - 50%));;letter-spacing:-0.100px;">Run | Debug | Codeium: Refactor | Explain | Generate Javadoc | </span><svg class="f" width="18" height="18" viewBox="0 0 16 16" style="transform:translate(831.62px,307.90px);color:#999999;"><path d="M8 8.707l3.646 3.647.708-.707L8.707 8l3.647-3.646-.707-.708L8 7.293 4.354 3.646l-.707.708L7.293 8l-3.646 3.646.707.708L8 8.707z"/></svg><svg width="15" height="15" viewBox="0 0 16 16" style="transform:translate(334.80px,237.60px);color:#8cc583;stroke-width:1.25;"><circle cx="8" cy="8" r="6.300"/><path d="M3.600 3.600l8.800 8.800"/></svg><svg width="15.5" height="15.5" viewBox="0 0 16 16" style="transform:translate(420.45px,421.85px);color:#f7ce46;"><path fill="currentColor" stroke="none" d="M8 1.500a4.300 4.300 0 0 0-2.500 7.800c.400.300.600.800.600 1.300v.400h3.800v-.400c0-.500.200-1 .600-1.300A4.300 4.300 0 0 0 8 1.500zM6.200 12h3.600v1.200H6.200zM6.800 13.900h2.400v.900H6.800z"/></svg><div style="transform:translate(1581.74px,103.80px);width:116.00px;height:2.20px;background:#3a3a3a"></div><div style="transform:translate(1581.74px,109.80px);width:116.00px;height:2.20px;background:#3a3a3a"></div><div style="transform:translate(1581.74px,92.30px);width:7.00px;height:1.15px;background:#4c6f94;opacity:.75"></div><div style="transform:translate(1589.74px,92.30px);width:23.00px;height:1.15px;background:#8a8a8a;opacity:.75"></div><div style="transform:translate(1581.74px,96.30px);width:6.00px;height:1.15px;background:#4c6f94;opacity:.75"></div><div style="transform:translate(1588.74px,96.30px);width:43.00px;height:1.15px;background:#8a8a8a;opacity:.75"></div><div style="transform:translate(1581.74px,98.30px);width:6.00px;height:1.15px;background:#4c6f94;opacity:.75"></div><div style="transform:translate(1588.74px,98.30px);width:61.00px;height:1.15px;background:#8a8a8a;opacity:.75"></div><div style="transform:translate(1581.74px,102.30px);width:22.00px;height:1.15px;background:#4f8a7d;opacity:.75"></div><div style="transform:translate(1581.74px,104.30px);width:12.00px;height:1.15px;background:#4c6f94;opacity:.75"></div><div style="transform:translate(1594.74px,104.30px);width:21.00px;height:1.15px;background:#4f8a7d;opacity:.75"></div><div style="transform:translate(1616.74px,104.30px);width:1.00px;height:1.15px;background:#a08f3a;opacity:.75"></div><div style="transform:translate(1583.74px,108.30px);width:13.00px;height:1.15px;background:#4c6f94;opacity:.75"></div><div style="transform:translate(1597.74px,108.30px);width:4.00px;height:1.15px;background:#4f8a7d;opacity:.75"></div><div style="transform:translate(1602.74px,108.30px);width:4.00px;height:1.15px;background:#8f8f74;opacity:.75"></div><div style="transform:translate(1607.74px,108.30px);width:6.00px;height:1.15px;background:#4f8a7d;opacity:.75"></div><div style="transform:translate(1616.74px,108.30px);width:4.00px;height:1.15px;background:#7393a5;opacity:.75"></div><div style="transform:translate(1621.74px,108.30px);width:2.00px;height:1.15px;background:#8a5590;opacity:.75"></div><div style="transform:translate(1585.74px,110.30px);width:17.00px;height:1.15px;background:#7393a5;opacity:.75"></div><div style="transform:translate(1603.74px,110.30px);width:3.00px;height:1.15px;background:#8f8f74;opacity:.75"></div><div style="transform:translate(1607.74px,110.30px);width:21.00px;height:1.15px;background:#7393a5;opacity:.75"></div><div style="transform:translate(1629.74px,110.30px);width:5.00px;height:1.15px;background:#7393a5;opacity:.75"></div><div style="transform:translate(1636.74px,110.30px);width:4.00px;height:1.15px;background:#7393a5;opacity:.75"></div><div style="transform:translate(1583.74px,112.30px);width:1.00px;height:1.15px;background:#8a5590;opacity:.75"></div><div style="transform:translate(1581.74px,116.30px);width:1.00px;height:1.15px;background:#a08f3a;opacity:.75"></div><div style="transform:translate(1698.00px,92.00px);width:14.00px;height:696.24px;background:#424242"></div><div style="transform:translate(1698.00px,788.24px);width:1.00px;height:259.76px;background:#2b2b2b"></div><div style="transform:translate(1703.00px,212.00px);width:4.50px;height:17.00px;background:#9a9a9a"></div><div style="transform:translate(1703.00px,279.69px);width:4.50px;height:17.00px;background:#9a9a9a"></div><div style="transform:translate(1698.00px,348.81px);width:14.00px;height:2.00px;background:#a5a5a5"></div></div>
<div class="status"><div class="remote"><svg class="f" width="14.5" height="14.5" viewBox="0 0 16 16" style="transform:translate(9.75px,4.05px);color:#fff;"><path d="M12.904 9.57L8.928 5.596l3.976-3.976-.619-.62L8 5.286v.619l4.285 4.285.619-.62zM3 5.62l4.072 4.05L3 13.74l.619.619L8 9.979V9.36L3.619 5 3 5.62z"/></svg></div><svg width="15" height="15" viewBox="0 0 16 16" style="transform:translate(41.31px,3.80px);color:#fff;stroke-width:1.2;"><circle cx="8" cy="8" r="6.300"/><path d="M5.400 5.400l5.200 5.200M10.600 5.400l-5.200 5.200"/></svg><span class="t sb" style="transform:translate(59.86px,calc(11.30px - 50%));;letter-spacing:0.250px;">0</span><svg width="14.5" height="14.5" viewBox="0 0 16 16" style="transform:translate(70.07px,4.05px);color:#fff;stroke-width:1.2;"><path d="M8 2L14.500 13.700h-13z" stroke-linejoin="round"/><path d="M8 6.200v4M8 11.300v1.200"/></svg><span class="t sb" style="transform:translate(88.84px,calc(11.30px - 50%));;letter-spacing:0.250px;">0</span><svg width="14" height="14" viewBox="0 0 16 16" style="transform:translate(111.76px,4.30px);color:#fff;stroke-width:1.1;"><path d="M8 5.600L5 14.500M8 5.600l3 8.900M6.100 11.300h3.800M5.400 2.200a4 4 0 0 0 0 5.600M10.600 2.200a4 4 0 0 1 0 5.600M3.400.600a6.800 6.800 0 0 0 0 8.800M12.600.600a6.800 6.800 0 0 1 0 8.800"/><circle cx="8" cy="4.800" r=".900"/></svg><span class="t sb" style="transform:translate(129.22px,calc(11.30px - 50%));;letter-spacing:0.250px;">0</span><svg width="14" height="14" viewBox="0 0 16 16" style="transform:translate(153.10px,4.10px);color:#fff;stroke-width:1.1;"><path d="M2.500 7h9v3.500a4 4 0 0 1-4 4h-1a4 4 0 0 1-4-4zM11.500 8h1.300a1.900 1.900 0 0 1 0 3.800h-1.500M4.500 1.500c.700.900-.700 1.500 0 2.500M7 1.500c.700.900-.700 1.500 0 2.500M9.500 1.500c.700.900-.700 1.500 0 2.500"/></svg><span class="t sb" style="transform:translate(169.60px,calc(11.30px - 50%));;letter-spacing:0.014px;">Java: Ready</span><div style="transform:translate(1074.35px,0.00px);width:33.37px;height:22.00px;background:#1f4877"></div><svg width="13.5" height="13.5" viewBox="0 0 16 16" style="transform:translate(1083.63px,4.55px);color:#fff;stroke-width:1.2;"><circle cx="6.800" cy="6.800" r="4.800"/><path d="M10.300 10.300L14.500 14.500M4.600 6.800h4.400M6.800 4.600v4.400" stroke-width="1.100"/></svg><span class="t sb" style="transform:translate(1114.96px,calc(11.30px - 50%));;letter-spacing:0.358px;">行 14、列 1</span><span class="t sb" style="transform:translate(1197.27px,calc(11.30px - 50%));;letter-spacing:0.057px;">タブのサイズ: 2</span><span class="t sb" style="transform:translate(1299.52px,calc(11.30px - 50%));;letter-spacing:0.468px;">UTF-8</span><span class="t sb" style="transform:translate(1352.14px,calc(11.30px - 50%));;letter-spacing:-0.355px;">LF</span><svg width="14" height="14" viewBox="0 0 16 16" style="transform:translate(1380.29px,4.30px);color:#fff;stroke-width:1.3;"><path d="M5.500 2.500c-1.500 0-2 .600-2 2v1.700c0 1-.500 1.600-1.500 1.800 1 .200 1.500.800 1.500 1.800v1.700c0 1.400.500 2 2 2"/><path d="M10.500 5.500v4.500"/><circle cx="10.500" cy="11.700" r="1.600"/></svg><span class="t sb" style="transform:translate(1399.88px,calc(11.30px - 50%));;letter-spacing:-0.076px;">Java</span><svg width="12.5" height="12.5" viewBox="0 0 16 16" style="transform:translate(1440.31px,5.35px);color:#fff;stroke-width:1.25;"><circle cx="8" cy="7" r="1.600"/><path d="M8 8.600v6M4.900 10.600a4.600 4.600 0 1 1 6.200 0M3.200 12.700a7 7 0 1 1 9.600 0" transform="translate(0 -.5)"/></svg><span class="t sb" style="transform:translate(1456.89px,calc(11.30px - 50%));;letter-spacing:0.131px;">Go Live</span><span class="t sb" style="transform:translate(1515.44px,calc(11.30px - 50%));;letter-spacing:0.252px;">Codeium: {...}</span><svg width="14" height="14" viewBox="0 0 16 16" style="transform:translate(1607.01px,4.30px);color:#fff;stroke-width:1.2;"><circle cx="8" cy="8" r="6.300"/><path d="M3.600 12.400l8.800-8.800"/></svg><span class="t sb" style="transform:translate(1625.06px,calc(11.30px - 50%));;letter-spacing:0.389px;">Prettier</span><svg width="14.5" height="14.5" viewBox="0 0 16 16" style="transform:translate(1683.13px,4.25px);color:#fff;stroke-width:1.2;"><path d="M2.300 11.700h10.400M3.600 11.700V6.800a4.400 4.400 0 0 1 5.500-4.250M12.400 9.200v2.500M6.500 13.200a1.600 1.600 0 0 0 3 0"/><circle cx="12.300" cy="4.300" r="2.600" fill="currentColor" stroke="none"/></svg></div>
</div></div>
</body></html>
